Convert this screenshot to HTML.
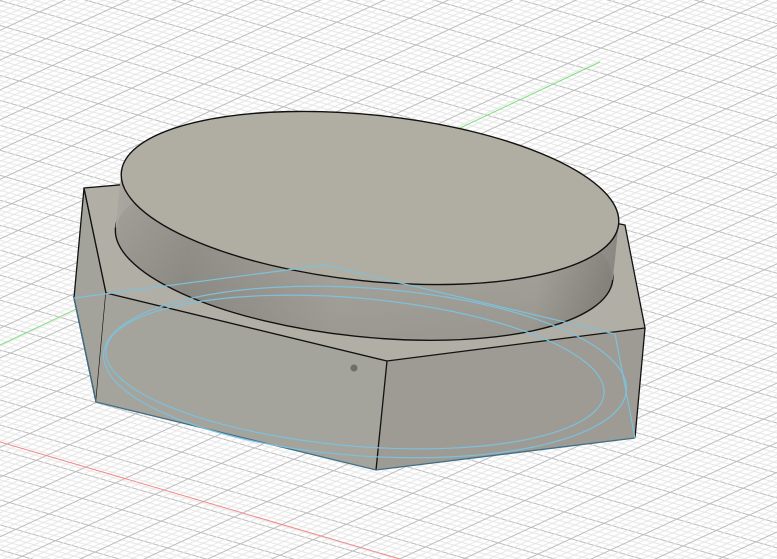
<!DOCTYPE html>
<html><head><meta charset="utf-8"><style>
html,body{margin:0;padding:0;background:#fff;overflow:hidden}
svg{display:block}
</style></head><body>
<svg width="777" height="559" viewBox="0 0 777 559" xmlns="http://www.w3.org/2000/svg">
<defs>
<pattern id="pa" width="40" height="27" patternUnits="userSpaceOnUse" patternTransform="rotate(-25)">
  <line x1="0" y1="0.5" x2="40" y2="0.5" stroke="#bdbdbd" stroke-width="1"/>
  <line x1="0" y1="5.9" x2="40" y2="5.9" stroke="#e6e6e6" stroke-width="1"/>
  <line x1="0" y1="11.3" x2="40" y2="11.3" stroke="#e6e6e6" stroke-width="1"/>
  <line x1="0" y1="16.7" x2="40" y2="16.7" stroke="#e6e6e6" stroke-width="1"/>
  <line x1="0" y1="22.1" x2="40" y2="22.1" stroke="#e6e6e6" stroke-width="1"/>
</pattern>
<pattern id="pb" width="40" height="24" patternUnits="userSpaceOnUse" patternTransform="rotate(16)">
  <line x1="0" y1="0.5" x2="40" y2="0.5" stroke="#bdbdbd" stroke-width="1"/>
  <line x1="0" y1="5.3" x2="40" y2="5.3" stroke="#e6e6e6" stroke-width="1"/>
  <line x1="0" y1="10.1" x2="40" y2="10.1" stroke="#e6e6e6" stroke-width="1"/>
  <line x1="0" y1="14.9" x2="40" y2="14.9" stroke="#e6e6e6" stroke-width="1"/>
  <line x1="0" y1="19.7" x2="40" y2="19.7" stroke="#e6e6e6" stroke-width="1"/>
</pattern>
<linearGradient id="side" x1="0" y1="0" x2="1" y2="0">
  <stop offset="0" stop-color="#a8a69e"/>
  <stop offset="0.15" stop-color="#9a9891"/>
  <stop offset="0.45" stop-color="#b0aea5"/>
  <stop offset="0.85" stop-color="#aba9a0"/>
  <stop offset="1" stop-color="#8a8881"/>
</linearGradient>
<linearGradient id="shade" x1="0" y1="0" x2="0" y2="1">
  <stop offset="0" stop-color="#000" stop-opacity="0"/>
  <stop offset="1" stop-color="#000" stop-opacity="0.12"/>
</linearGradient>
</defs>
<rect width="777" height="559" fill="#fff"/>
<rect width="777" height="559" fill="url(#pb)"/>
<rect width="777" height="559" fill="url(#pa)"/>
<line x1="0" y1="345" x2="600" y2="62" stroke="#7ee07e" stroke-width="1"/>
<line x1="0" y1="442" x2="400" y2="559" stroke="#f08a8a" stroke-width="1"/>

<polygon points="84,188 106,293 96,402 74,298" fill="#a4a39b" stroke="#111" stroke-width="1.3"/>
<polygon points="106,293 387,361 376,470 96,402" fill="#a4a39c"/>
<polygon points="387,361 645,328 635,438 376,470" fill="#9d9b94"/>
<polygon points="84,188 130,184 610,222 625,225 645,328 387,361 106,293" fill="#b0aea5" stroke="#111" stroke-width="1.3"/>
<line x1="387" y1="361" x2="376" y2="470" stroke="#111" stroke-width="1.3"/>
<line x1="645" y1="328" x2="635" y2="438" stroke="#111" stroke-width="1.3"/>
<polyline points="74,298 96,402 376,470 635,438" fill="none" stroke="#3d6f8a" stroke-width="1.3"/>

<g transform="rotate(6 370 198)">
  <ellipse cx="370" cy="254" rx="250" ry="83" fill="url(#side)" stroke="#111" stroke-width="1.4"/>
  <rect x="120" y="198" width="500" height="56" fill="url(#side)"/>
  <ellipse cx="370" cy="254" rx="249" ry="82" fill="url(#shade)"/>
  <rect x="120" y="198" width="500" height="56" fill="#fff" fill-opacity="0"/>
  <ellipse cx="370" cy="198" rx="250" ry="83" fill="#b0ada2" stroke="#111" stroke-width="1.4"/>
</g>

<g fill="none" stroke="#7fc0db" stroke-width="1.2">
  <ellipse cx="365" cy="372" rx="262" ry="84" transform="rotate(4 365 372)"/>
  <ellipse cx="355" cy="372" rx="250" ry="74" transform="rotate(5 355 372)"/>
  <polyline points="74,298 325,265 615,334 635,438"/>
</g>
<circle cx="354" cy="368" r="3.5" fill="#6e6d69"/>
</svg>
</body></html>
